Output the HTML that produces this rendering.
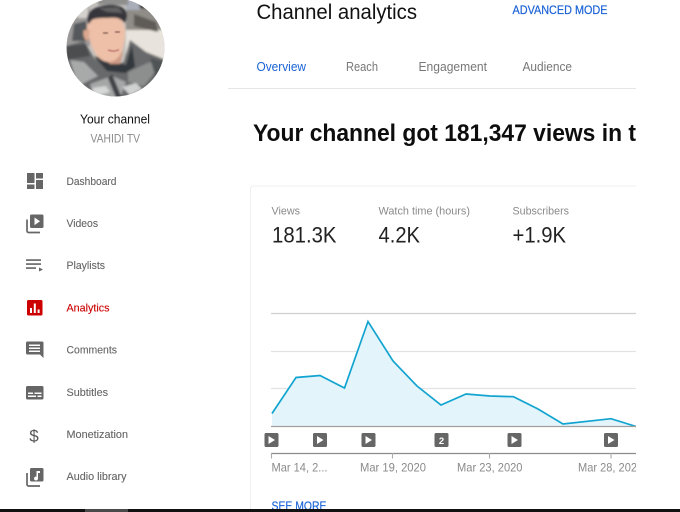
<!DOCTYPE html>
<html lang="en"><head><meta charset="utf-8"><title>Channel analytics</title>
<style>
html,body{margin:0;padding:0;background:#fff;width:680px;height:512px;overflow:hidden}
svg{display:block;position:absolute;left:0;top:0;filter:blur(.3px)}
text{font-family:"Liberation Sans",sans-serif}
</style></head><body>
<svg width="680" height="512" viewBox="0 0 680 512" xmlns="http://www.w3.org/2000/svg">
<defs>
<clipPath id="av"><circle cx="115.5" cy="47.5" r="49"/></clipPath>
<clipPath id="main"><rect x="228" y="0" width="408" height="509"/></clipPath>
<filter id="b1" x="-20%" y="-20%" width="140%" height="140%"><feGaussianBlur stdDeviation="1.100"/></filter>
<filter id="b2" x="-20%" y="-20%" width="140%" height="140%"><feGaussianBlur stdDeviation="0.500"/></filter>
</defs>
<rect width="680" height="512" fill="#fff"/>

<!-- avatar -->
<g clip-path="url(#av)">
<rect x="66" y="-2" width="100" height="100" fill="#c4c1bd"/>
<g filter="url(#b1)">
<rect x="126" y="30" width="40" height="30" fill="#e8e3dc"/>
<path d="M126 6h40v24h-40z" fill="#908c87"/>
<path d="M134 14l22 8 2 10-24-6z" fill="#5f5c59"/>
<rect x="126" y="-2" width="14" height="12" fill="#a8adb8"/>
<path d="M138 -2h14l8 12-20-2z" fill="#222"/>
<path d="M66 8h24v38H66z" fill="#9b9999"/>
<path d="M74 24l12-3 2 20H72z" fill="#55585c"/>
<path d="M76 8h12v10H78z" fill="#d5d2ce"/>
<path d="M98 -2h30v7H98z" fill="#8e8e8c"/>
<path d="M66 46 L84 41 L94 58 L110 68 L124 62 L130 40 L146 52 L166 60 V100 H66Z" fill="#68696a"/>
<path d="M70 60l14 2 14 14-20 10z" fill="#a8aaaa"/>
<path d="M66 46l20-2 4 12-24 4z" fill="#4c4e50"/>
<path d="M90 84l22-8 14 6-6 16H94z" fill="#a5a7a7"/>
<path d="M112 74l10 24h-6l-8-20z" fill="#404346"/>
<path d="M128 72l22-10 8 6-14 18-16-4z" fill="#8d8f8f"/>
<path d="M150 58l16 4v10l-10 6z" fill="#505254"/>
<path d="M94 56l32 9 6-20 3 22-10 6-18-2z" fill="#33373c"/>
<path d="M122 87l14-4 6 6-12 6z" fill="#d0d2d2"/>
<path d="M92 88l14-2 4 6-14 4z" fill="#d6d7d7"/>
<path d="M104 58l6 6 10 0 3-12-18-2z" fill="#cf9a84"/>
<path d="M87 28 C87 17 98 14 110 15 C121 15 126 24 125 36 C124 51 119 62 108 62 C96 61 90 46 87 28Z" fill="#eec0a8"/>
<path d="M84 30c-2 3 0 11 4 11l2-11z" fill="#dca78f"/>
<path d="M88 23C84 12 95 6 108 5c12-1 20 4 19 12l-2 6c-5-5-9-6-17-5-8 0-15 0-17 3l-2 3z" fill="#35363a"/>
<path d="M98 8l20-1 5 6-16-1z" fill="#606062"/>
</g>
<g filter="url(#b2)">
<path d="M103 33h5M115 32h5" stroke="#7d5a4e" stroke-width="1.200"/>
<path d="M108 50c4 1.500 8 1.500 11-.5" stroke="#c07c74" stroke-width="1.500" fill="none"/>
</g>
</g>

<!-- sidebar -->
<text x="80" y="123.500" font-size="12.500" fill="#111" textLength="70" lengthAdjust="spacingAndGlyphs">Your channel</text>
<text x="90.500" y="142.500" font-size="11.500" fill="#8a8a8a" textLength="49.500" lengthAdjust="spacingAndGlyphs">VAHIDI TV</text>

<g font-size="11" fill="#666" stroke="#666" stroke-width=".12">
<text x="66.500" y="185" textLength="50" lengthAdjust="spacingAndGlyphs">Dashboard</text>
<text x="66.500" y="227" textLength="31.500" lengthAdjust="spacingAndGlyphs">Videos</text>
<text x="66.500" y="269" textLength="38.500" lengthAdjust="spacingAndGlyphs">Playlists</text>
<text x="66.500" y="311.500" textLength="43" lengthAdjust="spacingAndGlyphs" fill="#cc0000" stroke="#cc0000">Analytics</text>
<text x="66.500" y="353.500" textLength="50.500" lengthAdjust="spacingAndGlyphs">Comments</text>
<text x="66.500" y="396" textLength="41.500" lengthAdjust="spacingAndGlyphs">Subtitles</text>
<text x="66.500" y="438" textLength="61.500" lengthAdjust="spacingAndGlyphs">Monetization</text>
<text x="66.500" y="480" textLength="60" lengthAdjust="spacingAndGlyphs">Audio library</text>
</g>

<!-- sidebar icons -->
<g fill="#666">
<path d="M27 173h7.500v10H27zM27 184.500h7.500V189H27zM36 173h7v5.500h-7zM36 180h7v9h-7z"/>
<rect x="30" y="214.500" width="13.500" height="13.500" rx="1.500"/>
<path d="M27 219.500v11.500a1.500 1.500 0 0 0 1.500 1.500H40" fill="none" stroke="#666" stroke-width="1.700"/>
<path d="M34.500 217.500l5.500 3.800-5.500 3.800z" fill="#fff"/>
<path d="M26 259.300h15v1.600H26zM26 263.300h15v1.600H26zM26 267.300h10v1.600H26zM39 267.500l4 2-4 2z"/>
<rect x="27" y="300" width="15.500" height="15.500" rx="1.500" fill="#cc0000"/>
<path d="M30 308h2v5h-2zM33.800 303.500h2V313h-2zM37.600 309.500h2v3.500h-2z" fill="#fff"/>
<path d="M27.500 341.500h14.500a1.500 1.500 0 0 1 1.500 1.500v15l-3.500-3.500H27.500a1.500 1.500 0 0 1-1.500-1.500v-10a1.500 1.500 0 0 1 1.500-1.500z"/>
<path d="M29 344.500h11v1.500H29zM29 347.500h11v1.500H29zM29 350.500h11v1.500H29z" fill="#fff"/>
<rect x="26" y="386" width="17.500" height="13.500" rx="1.500"/>
<path d="M28 392.500h5v1.500h-5zM34.500 392.500h7v1.500h-7zM28 395.500h8v1.500h-8zM37.500 395.500h4v1.500h-4z" fill="#fff"/>
<text x="34" y="441.500" font-size="17" text-anchor="middle" fill="#555">$</text>
<rect x="30" y="468" width="13.500" height="13.500" rx="1.500"/>
<path d="M27 473v11.500a1.500 1.500 0 0 0 1.500 1.500H40" fill="none" stroke="#666" stroke-width="1.700"/>
<path d="M36.500 471h3.500v2h-2v5.500a2 2 0 1 1-1.500-1.900z" fill="#fff"/>
</g>

<!-- main -->
<g clip-path="url(#main)">
<text x="256.500" y="19" font-size="21" fill="#111" textLength="160.500" lengthAdjust="spacingAndGlyphs">Channel analytics</text>
<text x="512.500" y="14" font-size="12" fill="#1a62d6" textLength="95" lengthAdjust="spacingAndGlyphs" stroke="#1a62d6" stroke-width=".2">ADVANCED MODE</text>
<text x="256.500" y="71" font-size="12.500" fill="#1a62d6" textLength="49.500" lengthAdjust="spacingAndGlyphs">Overview</text>
<g font-size="12.500" fill="#777">
<text x="346" y="71" textLength="32" lengthAdjust="spacingAndGlyphs">Reach</text>
<text x="418.500" y="71" textLength="68.500" lengthAdjust="spacingAndGlyphs">Engagement</text>
<text x="522.500" y="71" textLength="49.500" lengthAdjust="spacingAndGlyphs">Audience</text>
</g>
<rect x="228" y="88" width="408" height="1" fill="#e6e6e6"/>
<text x="253" y="141" font-size="24" font-weight="700" fill="#0d0d0d" textLength="383" lengthAdjust="spacingAndGlyphs">Your channel got 181,347 views in t</text>

<!-- card -->
<path d="M250.500 520V189a3 3 0 0 1 3-3H640" fill="none" stroke="#efefef" stroke-width="1"/>
<g font-size="11" fill="#8a8a8a">
<text x="271.500" y="214.500" textLength="28.500" lengthAdjust="spacingAndGlyphs">Views</text>
<text x="378.500" y="214.500" textLength="91.500" lengthAdjust="spacingAndGlyphs">Watch time (hours)</text>
<text x="512.500" y="214.500" textLength="56.500" lengthAdjust="spacingAndGlyphs">Subscribers</text>
</g>
<g font-size="22" fill="#222">
<text x="272" y="242.500" textLength="64.500" lengthAdjust="spacingAndGlyphs">181.3K</text>
<text x="378.500" y="242.500" textLength="41.500" lengthAdjust="spacingAndGlyphs">4.2K</text>
<text x="512.500" y="242.500" textLength="53.500" lengthAdjust="spacingAndGlyphs">+1.9K</text>
</g>

<!-- chart -->
<path d="M271 313.500h365" stroke="#cfcfcf" stroke-width="1.200"/>
<path d="M271 351.500h365M271 388.500h365" stroke="#e2e2e2" stroke-width="1.200"/>
<path d="M272 413.500L296 377.500 320 375.500 344.500 388 368 321.500 393 361 417 386 441 405 466 394 490 396 513.500 396.700 538 409 563 424 611 418.700 636 426.500V426.500H272Z" fill="#e3f4fa"/>
<path d="M272 413.500L296 377.500 320 375.500 344.500 388 368 321.500 393 361 417 386 441 405 466 394 490 396 513.500 396.700 538 409 563 424 611 418.700 636 426.500" fill="none" stroke="#12a4d0" stroke-width="1.700"/>
<path d="M271 426.500h365" stroke="#a0a0a0" stroke-width="1.200"/>

<g fill="#666">
<rect x="264.500" y="433" width="14" height="14" rx="1.500"/>
<rect x="313" y="433" width="14" height="14" rx="1.500"/>
<rect x="361.500" y="433" width="14" height="14" rx="1.500"/>
<rect x="434.500" y="433" width="14" height="14" rx="1.500"/>
<rect x="507.500" y="433" width="14" height="14" rx="1.500"/>
<rect x="604" y="433" width="14" height="14" rx="1.500"/>
</g>
<g fill="#fff">
<path d="M268.500 436l6.500 4-6.500 4zM317 436l6.500 4-6.500 4zM365.500 436l6.500 4-6.500 4zM511.500 436l6.500 4-6.500 4zM608 436l6.500 4-6.500 4z"/>
<text x="441.500" y="444" font-size="9.500" font-weight="700" text-anchor="middle">2</text>
</g>

<path d="M271 453.500h365" stroke="#8c8c8c" stroke-width="1.300"/>
<path d="M271.500 453v5.500M392.500 453v5.500M489.500 453v5.500M611 453v5.500" stroke="#aaa" stroke-width="1.100"/>
<g font-size="12" fill="#8a8a8a">
<text x="271.500" y="471.500" textLength="56" lengthAdjust="spacingAndGlyphs">Mar 14, 2...</text>
<text x="360" y="471.500" textLength="66" lengthAdjust="spacingAndGlyphs">Mar 19, 2020</text>
<text x="457" y="471.500" textLength="65.500" lengthAdjust="spacingAndGlyphs">Mar 23, 2020</text>
<text x="578" y="471.500" textLength="59" lengthAdjust="spacingAndGlyphs">Mar 28, 202</text>
</g>
<text x="271.500" y="510" font-size="11.500" fill="#1a62d6" textLength="55" lengthAdjust="spacingAndGlyphs" stroke="#1a62d6" stroke-width=".15">SEE MORE</text>
</g>

<!-- bottom bar -->
<rect x="0" y="509" width="680" height="3" fill="#111"/>
<rect x="85" y="509" width="43" height="3" fill="#4a4a4a"/>
</svg>
</body></html>
